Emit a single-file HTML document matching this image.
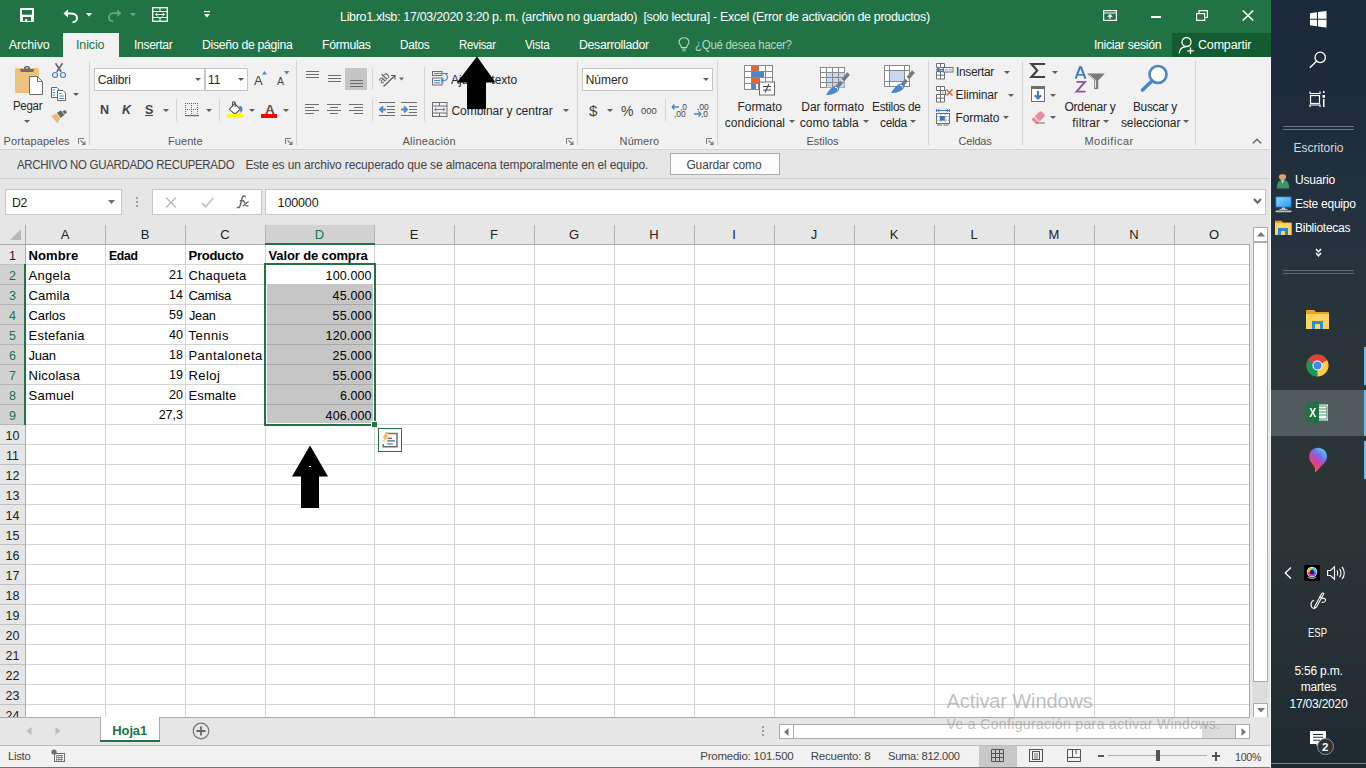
<!DOCTYPE html>
<html><head><meta charset="utf-8"><style>
*{margin:0;padding:0;box-sizing:border-box}
html,body{width:1366px;height:768px;overflow:hidden;background:#fff;font-family:"Liberation Sans",sans-serif;}
.a{position:absolute}
.t{position:absolute;white-space:nowrap;line-height:1}
svg{position:absolute;overflow:visible}
</style></head><body>
<div class="a" style="left:0px;top:225px;width:1250px;height:20px;background:#e6e6e6;"></div>
<div class="a" style="left:0px;top:245px;width:25px;height:472px;background:#e6e6e6;"></div>
<div class="a" style="left:26px;top:245px;width:1224px;height:472px;background:#fff;"></div>
<div class="a" style="left:26px;top:264px;width:1224px;height:1px;background:#d4d4d4;"></div>
<div class="a" style="left:26px;top:284px;width:1224px;height:1px;background:#d4d4d4;"></div>
<div class="a" style="left:26px;top:304px;width:1224px;height:1px;background:#d4d4d4;"></div>
<div class="a" style="left:26px;top:324px;width:1224px;height:1px;background:#d4d4d4;"></div>
<div class="a" style="left:26px;top:344px;width:1224px;height:1px;background:#d4d4d4;"></div>
<div class="a" style="left:26px;top:364px;width:1224px;height:1px;background:#d4d4d4;"></div>
<div class="a" style="left:26px;top:384px;width:1224px;height:1px;background:#d4d4d4;"></div>
<div class="a" style="left:26px;top:404px;width:1224px;height:1px;background:#d4d4d4;"></div>
<div class="a" style="left:26px;top:424px;width:1224px;height:1px;background:#d4d4d4;"></div>
<div class="a" style="left:26px;top:444px;width:1224px;height:1px;background:#d4d4d4;"></div>
<div class="a" style="left:26px;top:464px;width:1224px;height:1px;background:#d4d4d4;"></div>
<div class="a" style="left:26px;top:484px;width:1224px;height:1px;background:#d4d4d4;"></div>
<div class="a" style="left:26px;top:504px;width:1224px;height:1px;background:#d4d4d4;"></div>
<div class="a" style="left:26px;top:524px;width:1224px;height:1px;background:#d4d4d4;"></div>
<div class="a" style="left:26px;top:544px;width:1224px;height:1px;background:#d4d4d4;"></div>
<div class="a" style="left:26px;top:564px;width:1224px;height:1px;background:#d4d4d4;"></div>
<div class="a" style="left:26px;top:584px;width:1224px;height:1px;background:#d4d4d4;"></div>
<div class="a" style="left:26px;top:604px;width:1224px;height:1px;background:#d4d4d4;"></div>
<div class="a" style="left:26px;top:624px;width:1224px;height:1px;background:#d4d4d4;"></div>
<div class="a" style="left:26px;top:644px;width:1224px;height:1px;background:#d4d4d4;"></div>
<div class="a" style="left:26px;top:664px;width:1224px;height:1px;background:#d4d4d4;"></div>
<div class="a" style="left:26px;top:684px;width:1224px;height:1px;background:#d4d4d4;"></div>
<div class="a" style="left:26px;top:704px;width:1224px;height:1px;background:#d4d4d4;"></div>
<div class="a" style="left:26px;top:724px;width:1224px;height:1px;background:#d4d4d4;"></div>
<div class="a" style="left:105px;top:245px;width:1px;height:472px;background:#d4d4d4;"></div>
<div class="a" style="left:185px;top:245px;width:1px;height:472px;background:#d4d4d4;"></div>
<div class="a" style="left:265px;top:245px;width:1px;height:472px;background:#d4d4d4;"></div>
<div class="a" style="left:374px;top:245px;width:1px;height:472px;background:#d4d4d4;"></div>
<div class="a" style="left:454px;top:245px;width:1px;height:472px;background:#d4d4d4;"></div>
<div class="a" style="left:534px;top:245px;width:1px;height:472px;background:#d4d4d4;"></div>
<div class="a" style="left:614px;top:245px;width:1px;height:472px;background:#d4d4d4;"></div>
<div class="a" style="left:694px;top:245px;width:1px;height:472px;background:#d4d4d4;"></div>
<div class="a" style="left:774px;top:245px;width:1px;height:472px;background:#d4d4d4;"></div>
<div class="a" style="left:854px;top:245px;width:1px;height:472px;background:#d4d4d4;"></div>
<div class="a" style="left:934px;top:245px;width:1px;height:472px;background:#d4d4d4;"></div>
<div class="a" style="left:1014px;top:245px;width:1px;height:472px;background:#d4d4d4;"></div>
<div class="a" style="left:1094px;top:245px;width:1px;height:472px;background:#d4d4d4;"></div>
<div class="a" style="left:1174px;top:245px;width:1px;height:472px;background:#d4d4d4;"></div>
<div class="a" style="left:25px;top:225px;width:1px;height:20px;background:#b4b4b4;"></div>
<div class="a" style="left:105px;top:225px;width:1px;height:20px;background:#b4b4b4;"></div>
<div class="a" style="left:185px;top:225px;width:1px;height:20px;background:#b4b4b4;"></div>
<div class="a" style="left:265px;top:225px;width:1px;height:20px;background:#b4b4b4;"></div>
<div class="a" style="left:374px;top:225px;width:1px;height:20px;background:#b4b4b4;"></div>
<div class="a" style="left:454px;top:225px;width:1px;height:20px;background:#b4b4b4;"></div>
<div class="a" style="left:534px;top:225px;width:1px;height:20px;background:#b4b4b4;"></div>
<div class="a" style="left:614px;top:225px;width:1px;height:20px;background:#b4b4b4;"></div>
<div class="a" style="left:694px;top:225px;width:1px;height:20px;background:#b4b4b4;"></div>
<div class="a" style="left:774px;top:225px;width:1px;height:20px;background:#b4b4b4;"></div>
<div class="a" style="left:854px;top:225px;width:1px;height:20px;background:#b4b4b4;"></div>
<div class="a" style="left:934px;top:225px;width:1px;height:20px;background:#b4b4b4;"></div>
<div class="a" style="left:1014px;top:225px;width:1px;height:20px;background:#b4b4b4;"></div>
<div class="a" style="left:1094px;top:225px;width:1px;height:20px;background:#b4b4b4;"></div>
<div class="a" style="left:1174px;top:225px;width:1px;height:20px;background:#b4b4b4;"></div>
<div class="a" style="left:0px;top:244px;width:1250px;height:1px;background:#ababab;"></div>
<div class="a" style="left:25px;top:225px;width:1px;height:492px;background:#ababab;"></div>
<div class="a" style="left:0px;top:264px;width:25px;height:1px;background:#c0c0c0;"></div>
<div class="a" style="left:0px;top:284px;width:25px;height:1px;background:#c0c0c0;"></div>
<div class="a" style="left:0px;top:304px;width:25px;height:1px;background:#c0c0c0;"></div>
<div class="a" style="left:0px;top:324px;width:25px;height:1px;background:#c0c0c0;"></div>
<div class="a" style="left:0px;top:344px;width:25px;height:1px;background:#c0c0c0;"></div>
<div class="a" style="left:0px;top:364px;width:25px;height:1px;background:#c0c0c0;"></div>
<div class="a" style="left:0px;top:384px;width:25px;height:1px;background:#c0c0c0;"></div>
<div class="a" style="left:0px;top:404px;width:25px;height:1px;background:#c0c0c0;"></div>
<div class="a" style="left:0px;top:424px;width:25px;height:1px;background:#c0c0c0;"></div>
<div class="a" style="left:0px;top:444px;width:25px;height:1px;background:#c0c0c0;"></div>
<div class="a" style="left:0px;top:464px;width:25px;height:1px;background:#c0c0c0;"></div>
<div class="a" style="left:0px;top:484px;width:25px;height:1px;background:#c0c0c0;"></div>
<div class="a" style="left:0px;top:504px;width:25px;height:1px;background:#c0c0c0;"></div>
<div class="a" style="left:0px;top:524px;width:25px;height:1px;background:#c0c0c0;"></div>
<div class="a" style="left:0px;top:544px;width:25px;height:1px;background:#c0c0c0;"></div>
<div class="a" style="left:0px;top:564px;width:25px;height:1px;background:#c0c0c0;"></div>
<div class="a" style="left:0px;top:584px;width:25px;height:1px;background:#c0c0c0;"></div>
<div class="a" style="left:0px;top:604px;width:25px;height:1px;background:#c0c0c0;"></div>
<div class="a" style="left:0px;top:624px;width:25px;height:1px;background:#c0c0c0;"></div>
<div class="a" style="left:0px;top:644px;width:25px;height:1px;background:#c0c0c0;"></div>
<div class="a" style="left:0px;top:664px;width:25px;height:1px;background:#c0c0c0;"></div>
<div class="a" style="left:0px;top:684px;width:25px;height:1px;background:#c0c0c0;"></div>
<div class="a" style="left:0px;top:704px;width:25px;height:1px;background:#c0c0c0;"></div>
<div class="a" style="left:0px;top:724px;width:25px;height:1px;background:#c0c0c0;"></div>
<svg style="left:10px;top:229px" width="12" height="12"><path d="M11 0 L11 11 L0 11 Z" fill="#b8b8b8"/></svg>
<div class="a" style="left:266px;top:225px;width:108px;height:18px;background:#d2d2d2;"></div>
<div class="a" style="left:265px;top:243px;width:110px;height:2px;background:#217346;"></div>
<div class="a" style="left:0px;top:265px;width:24px;height:159px;background:#d2d2d2;"></div>
<div class="a" style="left:0px;top:284px;width:24px;height:1px;background:#b4b4b4;"></div>
<div class="a" style="left:0px;top:304px;width:24px;height:1px;background:#b4b4b4;"></div>
<div class="a" style="left:0px;top:324px;width:24px;height:1px;background:#b4b4b4;"></div>
<div class="a" style="left:0px;top:344px;width:24px;height:1px;background:#b4b4b4;"></div>
<div class="a" style="left:0px;top:364px;width:24px;height:1px;background:#b4b4b4;"></div>
<div class="a" style="left:0px;top:384px;width:24px;height:1px;background:#b4b4b4;"></div>
<div class="a" style="left:0px;top:404px;width:24px;height:1px;background:#b4b4b4;"></div>
<div class="a" style="left:0px;top:424px;width:24px;height:1px;background:#b4b4b4;"></div>
<div class="a" style="left:24px;top:264px;width:2px;height:161px;background:#217346;"></div>
<div class="t" style="left:25px;top:228px;width:80px;text-align:center;font-size:13px;color:#222">A</div>
<div class="t" style="left:105px;top:228px;width:80px;text-align:center;font-size:13px;color:#222">B</div>
<div class="t" style="left:185px;top:228px;width:80px;text-align:center;font-size:13px;color:#222">C</div>
<div class="t" style="left:265px;top:228px;width:109px;text-align:center;font-size:13px;color:#217346">D</div>
<div class="t" style="left:374px;top:228px;width:80px;text-align:center;font-size:13px;color:#222">E</div>
<div class="t" style="left:454px;top:228px;width:80px;text-align:center;font-size:13px;color:#222">F</div>
<div class="t" style="left:534px;top:228px;width:80px;text-align:center;font-size:13px;color:#222">G</div>
<div class="t" style="left:614px;top:228px;width:80px;text-align:center;font-size:13px;color:#222">H</div>
<div class="t" style="left:694px;top:228px;width:80px;text-align:center;font-size:13px;color:#222">I</div>
<div class="t" style="left:774px;top:228px;width:80px;text-align:center;font-size:13px;color:#222">J</div>
<div class="t" style="left:854px;top:228px;width:80px;text-align:center;font-size:13px;color:#222">K</div>
<div class="t" style="left:934px;top:228px;width:80px;text-align:center;font-size:13px;color:#222">L</div>
<div class="t" style="left:1014px;top:228px;width:80px;text-align:center;font-size:13px;color:#222">M</div>
<div class="t" style="left:1094px;top:228px;width:80px;text-align:center;font-size:13px;color:#222">N</div>
<div class="t" style="left:1174px;top:228px;width:80px;text-align:center;font-size:13px;color:#222">O</div>
<div class="t" style="left:0px;top:250.02px;width:25px;text-align:center;font-size:12.5px;color:#222">1</div>
<div class="t" style="left:0px;top:270.02px;width:25px;text-align:center;font-size:12.5px;color:#217346">2</div>
<div class="t" style="left:0px;top:290.02px;width:25px;text-align:center;font-size:12.5px;color:#217346">3</div>
<div class="t" style="left:0px;top:310.02px;width:25px;text-align:center;font-size:12.5px;color:#217346">4</div>
<div class="t" style="left:0px;top:330.02px;width:25px;text-align:center;font-size:12.5px;color:#217346">5</div>
<div class="t" style="left:0px;top:350.02px;width:25px;text-align:center;font-size:12.5px;color:#217346">6</div>
<div class="t" style="left:0px;top:370.02px;width:25px;text-align:center;font-size:12.5px;color:#217346">7</div>
<div class="t" style="left:0px;top:390.02px;width:25px;text-align:center;font-size:12.5px;color:#217346">8</div>
<div class="t" style="left:0px;top:410.02px;width:25px;text-align:center;font-size:12.5px;color:#217346">9</div>
<div class="t" style="left:0px;top:430.02px;width:25px;text-align:center;font-size:12.5px;color:#222">10</div>
<div class="t" style="left:0px;top:450.02px;width:25px;text-align:center;font-size:12.5px;color:#222">11</div>
<div class="t" style="left:0px;top:470.02px;width:25px;text-align:center;font-size:12.5px;color:#222">12</div>
<div class="t" style="left:0px;top:490.02px;width:25px;text-align:center;font-size:12.5px;color:#222">13</div>
<div class="t" style="left:0px;top:510.02px;width:25px;text-align:center;font-size:12.5px;color:#222">14</div>
<div class="t" style="left:0px;top:530.02px;width:25px;text-align:center;font-size:12.5px;color:#222">15</div>
<div class="t" style="left:0px;top:550.02px;width:25px;text-align:center;font-size:12.5px;color:#222">16</div>
<div class="t" style="left:0px;top:570.02px;width:25px;text-align:center;font-size:12.5px;color:#222">17</div>
<div class="t" style="left:0px;top:590.02px;width:25px;text-align:center;font-size:12.5px;color:#222">18</div>
<div class="t" style="left:0px;top:610.02px;width:25px;text-align:center;font-size:12.5px;color:#222">19</div>
<div class="t" style="left:0px;top:630.02px;width:25px;text-align:center;font-size:12.5px;color:#222">20</div>
<div class="t" style="left:0px;top:650.02px;width:25px;text-align:center;font-size:12.5px;color:#222">21</div>
<div class="t" style="left:0px;top:670.02px;width:25px;text-align:center;font-size:12.5px;color:#222">22</div>
<div class="t" style="left:0px;top:690.02px;width:25px;text-align:center;font-size:12.5px;color:#222">23</div>
<div class="t" style="left:0px;top:710.02px;width:25px;text-align:center;font-size:12.5px;color:#222">24</div>
<div class="a" style="left:267px;top:284px;width:106px;height:139px;background:#c6c6c6;"></div>
<div class="a" style="left:267px;top:304px;width:106px;height:1px;background:#a8a8a8;"></div>
<div class="a" style="left:267px;top:324px;width:106px;height:1px;background:#a8a8a8;"></div>
<div class="a" style="left:267px;top:344px;width:106px;height:1px;background:#a8a8a8;"></div>
<div class="a" style="left:267px;top:364px;width:106px;height:1px;background:#a8a8a8;"></div>
<div class="a" style="left:267px;top:384px;width:106px;height:1px;background:#a8a8a8;"></div>
<div class="a" style="left:267px;top:404px;width:106px;height:1px;background:#a8a8a8;"></div>
<div class="a" style="left:264px;top:263px;width:112px;height:2px;background:#217346;"></div>
<div class="a" style="left:264px;top:263px;width:2px;height:163px;background:#217346;"></div>
<div class="a" style="left:374px;top:263px;width:2px;height:158px;background:#217346;"></div>
<div class="a" style="left:264px;top:424px;width:107px;height:2px;background:#217346;"></div>
<div class="a" style="left:371px;top:421px;width:6px;height:6px;background:#fff;"></div>
<div class="a" style="left:372px;top:422px;width:5px;height:5px;background:#217346;"></div>
<div class="t" style="left:28.50px;top:249.15px;font-size:13px;color:#000;font-weight:bold;letter-spacing:0.120px;">Nombre</div>
<div class="t" style="left:108.50px;top:249.15px;font-size:13px;color:#000;font-weight:bold;letter-spacing:-0.300px;transform:scaleX(0.9385);transform-origin:0 0;">Edad</div>
<div class="t" style="left:188.50px;top:249.15px;font-size:13px;color:#000;font-weight:bold;letter-spacing:-0.257px;">Producto</div>
<div class="t" style="left:268.50px;top:249.15px;font-size:13px;color:#000;font-weight:bold;letter-spacing:-0.129px;">Valor de compra</div>
<div class="t" style="left:28.60px;top:269.15px;font-size:13px;color:#000;font-weight:normal;letter-spacing:0.260px;">Angela</div>
<div class="t" style="left:28.60px;top:289.15px;font-size:13px;color:#000;font-weight:normal;letter-spacing:0.140px;">Camila</div>
<div class="t" style="left:28.60px;top:309.15px;font-size:13px;color:#000;font-weight:normal;letter-spacing:-0.140px;">Carlos</div>
<div class="t" style="left:28.60px;top:329.15px;font-size:13px;color:#000;font-weight:normal;letter-spacing:0.212px;">Estefania</div>
<div class="t" style="left:28.60px;top:349.15px;font-size:13px;color:#000;font-weight:normal;letter-spacing:-0.267px;">Juan</div>
<div class="t" style="left:28.60px;top:369.15px;font-size:13px;color:#000;font-weight:normal;letter-spacing:0.214px;">Nicolasa</div>
<div class="t" style="left:28.60px;top:389.15px;font-size:13px;color:#000;font-weight:normal;letter-spacing:0.220px;">Samuel</div>
<div class="t" style="left:188.50px;top:269.15px;font-size:13px;color:#000;font-weight:normal;letter-spacing:0.200px;">Chaqueta</div>
<div class="t" style="left:188.50px;top:289.15px;font-size:13px;color:#000;font-weight:normal;letter-spacing:-0.280px;">Camisa</div>
<div class="t" style="left:188.50px;top:309.15px;font-size:13px;color:#000;font-weight:normal;letter-spacing:-0.300px;transform:scaleX(0.9817);transform-origin:0 0;">Jean</div>
<div class="t" style="left:188.50px;top:329.15px;font-size:13px;color:#000;font-weight:normal;letter-spacing:0.480px;">Tennis</div>
<div class="t" style="left:188.50px;top:349.15px;font-size:13px;color:#000;font-weight:normal;letter-spacing:0.430px;">Pantaloneta</div>
<div class="t" style="left:188.50px;top:369.15px;font-size:13px;color:#000;font-weight:normal;letter-spacing:0.450px;">Reloj</div>
<div class="t" style="left:188.50px;top:389.15px;font-size:13px;color:#000;font-weight:normal;letter-spacing:0.117px;">Esmalte</div>
<div class="t" style="left:100px;top:269.32px;width:83px;text-align:right;font-size:12.5px;color:#000">21</div>
<div class="t" style="left:100px;top:289.32px;width:83px;text-align:right;font-size:12.5px;color:#000">14</div>
<div class="t" style="left:100px;top:309.32px;width:83px;text-align:right;font-size:12.5px;color:#000">59</div>
<div class="t" style="left:100px;top:329.32px;width:83px;text-align:right;font-size:12.5px;color:#000">40</div>
<div class="t" style="left:100px;top:349.32px;width:83px;text-align:right;font-size:12.5px;color:#000">18</div>
<div class="t" style="left:100px;top:369.32px;width:83px;text-align:right;font-size:12.5px;color:#000">19</div>
<div class="t" style="left:100px;top:389.32px;width:83px;text-align:right;font-size:12.5px;color:#000">20</div>
<div class="t" style="left:100px;top:409.32px;width:83px;text-align:right;font-size:12.5px;color:#000">27,3</div>
<div class="t" style="left:325.60px;top:269.57px;font-size:12.5px;color:#000;font-weight:normal;letter-spacing:0.133px;">100.000</div>
<div class="t" style="left:332.60px;top:289.57px;font-size:12.5px;color:#000;font-weight:normal;letter-spacing:0.160px;">45.000</div>
<div class="t" style="left:332.60px;top:309.57px;font-size:12.5px;color:#000;font-weight:normal;letter-spacing:0.160px;">55.000</div>
<div class="t" style="left:325.60px;top:329.57px;font-size:12.5px;color:#000;font-weight:normal;letter-spacing:0.133px;">120.000</div>
<div class="t" style="left:332.60px;top:349.57px;font-size:12.5px;color:#000;font-weight:normal;letter-spacing:0.160px;">25.000</div>
<div class="t" style="left:332.60px;top:369.57px;font-size:12.5px;color:#000;font-weight:normal;letter-spacing:0.160px;">55.000</div>
<div class="t" style="left:340.10px;top:389.57px;font-size:12.5px;color:#000;font-weight:normal;letter-spacing:0.050px;">6.000</div>
<div class="t" style="left:325.60px;top:409.57px;font-size:12.5px;color:#000;font-weight:normal;letter-spacing:0.133px;">406.000</div>
<div class="a" style="left:1249px;top:245px;width:1px;height:472px;background:#ababab;"></div>
<div class="a" style="left:0px;top:0px;width:1271px;height:57px;background:#217346;"></div>
<svg style="left:20px;top:8px" width="14" height="14" viewBox="0 0 14 14">
<rect x="0" y="0" width="14" height="14" rx="0.8" fill="#fff"/>
<path d="M2 2 H12 V6 L11.3 6.7 H2.7 L2 6 Z" fill="#217346"/>
<rect x="3" y="9" width="8" height="3.9" fill="#217346"/>
<rect x="5.2" y="11" width="1.9" height="1.9" fill="#fff"/>
</svg>
<svg style="left:63px;top:8px" width="16" height="15" viewBox="0 0 16 15">
<path d="M0.5 5.5 L5 1.5 V9.5 Z" fill="#fff"/>
<path d="M4 5.5 H8.5 C11.8 5.5 14 7.5 14 10 C14 12.5 12 14.2 9.5 14.2" fill="none" stroke="#fff" stroke-width="2"/>
</svg>
<svg style="left:86px;top:13px" width="6" height="4"><path d="M0 0 H6 L3 3.5 Z" fill="#fff"/></svg>
<svg style="left:107px;top:8px" width="15" height="14" viewBox="0 0 16 15" opacity="0.35">
<path d="M15.5 5.5 L11 1.5 V9.5 Z" fill="#fff"/>
<path d="M12 5.5 H7.5 C4.2 5.5 2 7.5 2 10 C2 12.5 4 14.2 6.5 14.2" fill="none" stroke="#fff" stroke-width="2"/>
</svg>
<svg style="left:130px;top:13px" width="6" height="4" opacity="0.35"><path d="M0 0 H6 L3 3.5 Z" fill="#fff"/></svg>
<svg style="left:152px;top:7px" width="16" height="15" viewBox="0 0 16 15">
<rect x="0.7" y="0.7" width="14.6" height="13.6" fill="none" stroke="#fff" stroke-width="1.3"/>
<path d="M1 4.5 H15 M1 10.5 H15 M8 1 V4.5 M8 10.5 V14" stroke="#fff" stroke-width="1.1"/>
<path d="M3.5 7.5 H12.5 M3.5 7.5 L5.5 6 M3.5 7.5 L5.5 9 M12.5 7.5 L10.5 6 M12.5 7.5 L10.5 9" stroke="#fff" stroke-width="1"/>
</svg>
<svg style="left:204px;top:11px" width="6" height="7"><rect x="0" y="0" width="6" height="1.2" fill="#fff"/><path d="M0 3 H6 L3 6.5 Z" fill="#fff"/></svg>
<div class="t" style="left:339.50px;top:10.67px;font-size:12.5px;color:#fff;font-weight:normal;letter-spacing:-0.300px;transform:scaleX(0.9970);transform-origin:0 0;">Libro1.xlsb: 17/03/2020 3:20 p. m. (archivo no guardado)&nbsp; [solo lectura] - Excel (Error de activación de productos)</div>
<svg style="left:1103px;top:10px" width="14" height="11" viewBox="0 0 14 11">
<rect x="0.6" y="0.6" width="12.8" height="9.8" fill="none" stroke="#fff" stroke-width="1.2"/>
<path d="M1 3 H13" stroke="#fff" stroke-width="1"/>
<path d="M7 9 V4.5 M4.8 6.8 L7 4.5 L9.2 6.8" fill="none" stroke="#fff" stroke-width="1.2"/>
</svg>
<div class="a" style="left:1151px;top:16px;width:10px;height:1.5px;background:#fff;"></div>
<svg style="left:1196px;top:10px" width="12" height="11" viewBox="0 0 12 11">
<rect x="0.6" y="3.6" width="8" height="6.8" fill="none" stroke="#fff" stroke-width="1.2"/>
<path d="M3 3.5 V0.6 H11.4 V7.5 H8.8" fill="none" stroke="#fff" stroke-width="1.2"/>
</svg>
<svg style="left:1242px;top:10px" width="12" height="11" viewBox="0 0 12 11">
<path d="M0.8 0.5 L11.2 10.5 M11.2 0.5 L0.8 10.5" stroke="#fff" stroke-width="1.5"/>
</svg>
<div class="a" style="left:63px;top:33px;width:56px;height:24px;background:#f1f1f1;"></div>
<div class="t" style="left:8.80px;top:38.87px;font-size:12.5px;color:#fff;font-weight:normal;letter-spacing:-0.117px;">Archivo</div>
<div class="t" style="left:76.00px;top:38.87px;font-size:12.5px;color:#217346;font-weight:normal;letter-spacing:-0.140px;">Inicio</div>
<div class="t" style="left:134.00px;top:38.87px;font-size:12.5px;color:#fff;font-weight:normal;letter-spacing:-0.300px;transform:scaleX(0.9628);transform-origin:0 0;">Insertar</div>
<div class="t" style="left:202.00px;top:38.87px;font-size:12.5px;color:#fff;font-weight:normal;letter-spacing:-0.300px;transform:scaleX(0.9784);transform-origin:0 0;">Diseño de página</div>
<div class="t" style="left:322.00px;top:38.87px;font-size:12.5px;color:#fff;font-weight:normal;letter-spacing:-0.300px;transform:scaleX(0.9800);transform-origin:0 0;">Fórmulas</div>
<div class="t" style="left:400.40px;top:38.87px;font-size:12.5px;color:#fff;font-weight:normal;letter-spacing:-0.300px;transform:scaleX(0.9397);transform-origin:0 0;">Datos</div>
<div class="t" style="left:459.00px;top:38.87px;font-size:12.5px;color:#fff;font-weight:normal;letter-spacing:-0.300px;transform:scaleX(0.9113);transform-origin:0 0;">Revisar</div>
<div class="t" style="left:525.00px;top:38.87px;font-size:12.5px;color:#fff;font-weight:normal;letter-spacing:-0.300px;transform:scaleX(0.9394);transform-origin:0 0;">Vista</div>
<div class="t" style="left:579.00px;top:38.87px;font-size:12.5px;color:#fff;font-weight:normal;letter-spacing:-0.300px;transform:scaleX(0.9804);transform-origin:0 0;">Desarrollador</div>
<svg style="left:678px;top:37px" width="12" height="15" viewBox="0 0 12 15">
<path d="M3.5 10.5 C3.5 8.5 1 7.5 1 5 C1 2.5 3.2 0.8 6 0.8 C8.8 0.8 11 2.5 11 5 C11 7.5 8.5 8.5 8.5 10.5 Z" fill="none" stroke="#b9d7c4" stroke-width="1.1"/>
<path d="M3.8 12 H8.2 M4.5 13.8 H7.5" stroke="#b9d7c4" stroke-width="1.1"/>
</svg>
<div class="t" style="left:695.00px;top:38.87px;font-size:12.5px;color:#b9d7c4;font-weight:normal;letter-spacing:-0.300px;transform:scaleX(0.9177);transform-origin:0 0;">¿Qué desea hacer?</div>
<div class="t" style="left:1094.00px;top:38.87px;font-size:12.5px;color:#fff;font-weight:normal;letter-spacing:-0.300px;transform:scaleX(0.9783);transform-origin:0 0;">Iniciar sesión</div>
<div class="a" style="left:1172px;top:33px;width:99px;height:24px;background:#135c32;"></div>
<svg style="left:1178px;top:36px" width="18" height="18" viewBox="0 0 18 18">
<circle cx="8.5" cy="6" r="4.5" fill="none" stroke="#fff" stroke-width="1.3"/>
<path d="M1.2 17.5 C1.5 13.5 4 11 7.5 10.8" fill="none" stroke="#fff" stroke-width="1.3"/>
<path d="M12.5 11.5 V18 M9.3 14.8 H15.8" stroke="#fff" stroke-width="1.3"/>
</svg>
<div class="t" style="left:1198.00px;top:38.87px;font-size:12.5px;color:#fff;font-weight:normal;letter-spacing:-0.175px;">Compartir</div>
<div class="a" style="left:0px;top:57px;width:1271px;height:92px;background:#f1f1f1;"></div>
<div class="a" style="left:0px;top:148px;width:1271px;height:1px;background:#f6f6f6;"></div>
<div class="a" style="left:0px;top:149px;width:1271px;height:1px;background:#d2d2d2;"></div>
<div class="a" style="left:89px;top:61px;width:1px;height:84px;background:#d4d4d4;"></div>
<div class="a" style="left:296px;top:61px;width:1px;height:84px;background:#d4d4d4;"></div>
<div class="a" style="left:577px;top:61px;width:1px;height:84px;background:#d4d4d4;"></div>
<div class="a" style="left:717px;top:61px;width:1px;height:84px;background:#d4d4d4;"></div>
<div class="a" style="left:928px;top:61px;width:1px;height:84px;background:#d4d4d4;"></div>
<div class="a" style="left:1022px;top:61px;width:1px;height:84px;background:#d4d4d4;"></div>
<div class="a" style="left:1195px;top:61px;width:1px;height:84px;background:#d4d4d4;"></div>
<svg style="left:14px;top:65px" width="30" height="30" viewBox="0 0 30 30">
<rect x="1" y="3" width="24" height="25" rx="1.5" fill="#eec27c"/>
<path d="M6 4 H20 C20 5.5 19.5 7 18.5 7 H7.5 C6.5 7 6 5.5 6 4 Z" fill="#6e6e6e"/>
<path d="M10 4.5 V2.5 C10 0.5 16 0.5 16 2.5 V4.5 Z" fill="#6e6e6e"/>
<rect x="12" y="2" width="2" height="1.5" fill="#eec27c"/>
<path d="M15.5 11.5 H23.5 L28.5 16.5 V29.5 H15.5 Z" fill="#fff" stroke="#6e6e6e" stroke-width="1"/>
<path d="M23.5 11.5 V16.5 H28.5" fill="none" stroke="#6e6e6e" stroke-width="1"/>
</svg>
<div class="t" style="left:12.50px;top:99.67px;font-size:12.5px;color:#262626;font-weight:normal;letter-spacing:-0.300px;transform:scaleX(0.9161);transform-origin:0 0;">Pegar</div>
<svg style="left:24px;top:120px" width="6" height="4"><path d="M0 0 H6 L3 3 Z" fill="#5e5e5e"/></svg>
<svg style="left:50px;top:62px" width="18" height="18" viewBox="0 0 18 18">
<path d="M5.5 1.3 L11.2 9.8 M12.5 1.3 L6.8 9.8" stroke="#666" stroke-width="1.6"/>
<circle cx="5" cy="13" r="2.5" fill="none" stroke="#4a86c8" stroke-width="1.2"/>
<circle cx="13" cy="13" r="2.5" fill="none" stroke="#4a86c8" stroke-width="1.2"/>
</svg>
<svg style="left:50px;top:86px" width="18" height="16" viewBox="0 0 18 16">
<path d="M1.5 1.5 H7 L8.5 3 V11.5 H1.5 Z" fill="#fff" stroke="#666" stroke-width="1"/>
<path d="M2.5 4 H5 M2.5 6.5 H5 M2.5 9 H5" stroke="#4a86c8" stroke-width="1"/>
<path d="M7.5 4.5 H13 L15.5 7 V14.5 H7.5 Z" fill="#fff" stroke="#666" stroke-width="1"/>
<path d="M9 7.5 H11.5 M9 10 H14 M9 12.5 H14" stroke="#4a86c8" stroke-width="1"/>
</svg>
<svg style="left:73px;top:93px" width="6" height="4"><path d="M0 0 H6 L3 3 Z" fill="#5e5e5e"/></svg>
<svg style="left:51px;top:110px" width="17" height="14" viewBox="0 0 17 14">
<path d="M0.3 6 L5.5 3.5 L9 8.5 L6.5 13.5 Z" fill="#e8bd72"/>
<path d="M6 2.5 L10 0.5 L13.5 5 L9.5 8 Z" fill="#666"/>
<path d="M11.5 1.5 L14 0 L16.2 2.3 L13.8 4.2 Z" fill="#666"/>
</svg>
<div class="t" style="left:3.60px;top:135.54px;font-size:11px;color:#555;font-weight:normal;letter-spacing:0.109px;">Portapapeles</div>
<svg style="left:78px;top:138px" width="8" height="7" viewBox="0 0 8 7">
<path d="M0.5 6 V0.5 H6" fill="none" stroke="#7a7a7a" stroke-width="1"/>
<path d="M2.5 2.5 L7 6.5 M7 3.5 V6.5 H4" fill="none" stroke="#7a7a7a" stroke-width="1.1"/></svg>
<div class="a" style="left:94px;top:68px;width:111px;height:23px;background:#fff;border:1px solid #c6c6c6"></div>
<div class="a" style="left:205px;top:68px;width:43px;height:23px;background:#fff;border:1px solid #c6c6c6"></div>
<div class="t" style="left:97.80px;top:73.69px;font-size:12px;color:#262626;font-weight:normal;letter-spacing:-0.167px;">Calibri</div>
<svg style="left:195px;top:78px" width="6" height="4"><path d="M0 0 H6 L3 3 Z" fill="#5e5e5e"/></svg>
<div class="t" style="left:208px;top:74px;font-size:12px;color:#262626;font-weight:normal;">11</div>
<svg style="left:238px;top:78px" width="6" height="4"><path d="M0 0 H6 L3 3 Z" fill="#5e5e5e"/></svg>
<div class="t" style="left:254px;top:74px;font-size:13px;color:#444;font-weight:normal;">A</div>
<svg style="left:262px;top:71px" width="5" height="4"><path d="M0 3.5 L2.5 0 L5 3.5 Z" fill="#4a86c8"/></svg>
<div class="t" style="left:277px;top:76px;font-size:10.5px;color:#444;font-weight:normal;">A</div>
<svg style="left:284px;top:71px" width="6" height="4"><path d="M0 0 H5.5 L2.75 3.5 Z" fill="#4a86c8"/></svg>
<div class="t" style="left:100px;top:104px;font-size:12.5px;color:#444;font-weight:bold;">N</div>
<div class="t" style="left:122px;top:104px;font-size:12.5px;color:#444;font-weight:bold;"><i>K</i></div>
<div class="t" style="left:145px;top:104px;font-size:12.5px;color:#444;font-weight:bold;">S</div>
<div class="a" style="left:145px;top:115px;width:8px;height:1.3px;background:#444;"></div>
<svg style="left:163px;top:109px" width="6" height="4"><path d="M0 0 H6 L3 3 Z" fill="#5e5e5e"/></svg>
<div class="a" style="left:176px;top:99px;width:1px;height:22px;background:#d4d4d4;"></div>
<svg style="left:185px;top:103px" width="14" height="14" viewBox="0 0 14 14"><rect x="0" y="0" width="1" height="1" fill="#666"/><rect x="2" y="0" width="1" height="1" fill="#666"/><rect x="4" y="0" width="1" height="1" fill="#666"/><rect x="6" y="0" width="1" height="1" fill="#666"/><rect x="8" y="0" width="1" height="1" fill="#666"/><rect x="10" y="0" width="1" height="1" fill="#666"/><rect x="12" y="0" width="1" height="1" fill="#666"/><rect x="0" y="2" width="1" height="1" fill="#666"/><rect x="6" y="2" width="1" height="1" fill="#666"/><rect x="12" y="2" width="1" height="1" fill="#666"/><rect x="0" y="4" width="1" height="1" fill="#666"/><rect x="6" y="4" width="1" height="1" fill="#666"/><rect x="12" y="4" width="1" height="1" fill="#666"/><rect x="0" y="6" width="1" height="1" fill="#666"/><rect x="2" y="6" width="1" height="1" fill="#666"/><rect x="4" y="6" width="1" height="1" fill="#666"/><rect x="6" y="6" width="1" height="1" fill="#666"/><rect x="8" y="6" width="1" height="1" fill="#666"/><rect x="10" y="6" width="1" height="1" fill="#666"/><rect x="12" y="6" width="1" height="1" fill="#666"/><rect x="0" y="8" width="1" height="1" fill="#666"/><rect x="6" y="8" width="1" height="1" fill="#666"/><rect x="12" y="8" width="1" height="1" fill="#666"/><rect x="0" y="10" width="1" height="1" fill="#666"/><rect x="6" y="10" width="1" height="1" fill="#666"/><rect x="12" y="10" width="1" height="1" fill="#666"/><rect x="0" y="12" width="14" height="1.2" fill="#666"/>
</svg>
<svg style="left:206px;top:109px" width="6" height="4"><path d="M0 0 H6 L3 3 Z" fill="#5e5e5e"/></svg>
<div class="a" style="left:219px;top:99px;width:1px;height:22px;background:#d4d4d4;"></div>
<svg style="left:227px;top:101px" width="17" height="17" viewBox="0 0 17 17">
<path d="M2.3 8.3 L7.7 2.6 L13.5 8.5 L7.7 13 Z" fill="#fff" stroke="#555" stroke-width="1.1"/>
<path d="M5.5 5.5 V1.8 C5.5 0.6 8.2 0.6 8.2 1.8 V6" fill="none" stroke="#555" stroke-width="1.1"/>
<path d="M12 4.8 C14.5 4.8 16 6.5 15.5 9 C15.2 10.5 14 11.5 13 12 L13.5 8.5 Z" fill="#4a86c8"/>
<rect x="0" y="13" width="16" height="4" fill="#ffff00"/>
</svg>
<svg style="left:249px;top:109px" width="6" height="4"><path d="M0 0 H6 L3 3 Z" fill="#5e5e5e"/></svg>
<div class="t" style="left:265.00px;top:102.72px;font-size:13.5px;color:#555;font-weight:bold;letter-spacing:0.000px;">A</div>
<div class="a" style="left:261px;top:114px;width:16px;height:4px;background:#ff0000;"></div>
<svg style="left:283px;top:109px" width="6" height="4"><path d="M0 0 H6 L3 3 Z" fill="#5e5e5e"/></svg>
<div class="t" style="left:168.00px;top:135.64px;font-size:11px;color:#555;font-weight:normal;letter-spacing:0.060px;">Fuente</div>
<svg style="left:285px;top:138px" width="8" height="7" viewBox="0 0 8 7">
<path d="M0.5 6 V0.5 H6" fill="none" stroke="#7a7a7a" stroke-width="1"/>
<path d="M2.5 2.5 L7 6.5 M7 3.5 V6.5 H4" fill="none" stroke="#7a7a7a" stroke-width="1.1"/></svg>
<svg style="left:306px;top:71px" width="13" height="9"><rect x="0" y="0" width="13" height="1" fill="#6e6e6e"/><rect x="0" y="3" width="13" height="1" fill="#6e6e6e"/><rect x="0" y="6" width="13" height="1" fill="#6e6e6e"/></svg>
<svg style="left:328px;top:75px" width="13" height="9"><rect x="0" y="0" width="13" height="1" fill="#6e6e6e"/><rect x="0" y="3" width="13" height="1" fill="#6e6e6e"/><rect x="0" y="6" width="13" height="1" fill="#6e6e6e"/></svg>
<div class="a" style="left:345px;top:68px;width:22px;height:22px;background:#c5c5c5;"></div>
<svg style="left:350px;top:80px" width="13" height="9"><rect x="0" y="0" width="13" height="1" fill="#6e6e6e"/><rect x="0" y="3" width="13" height="1" fill="#6e6e6e"/><rect x="0" y="6" width="13" height="1" fill="#6e6e6e"/></svg>
<div class="a" style="left:372px;top:68px;width:1px;height:22px;background:#d4d4d4;"></div>
<svg style="left:377px;top:70px" width="28" height="18" viewBox="0 0 28 18">
<g transform="rotate(-45 7 8)"><text x="1" y="11" font-family="Liberation Sans" font-size="10.5" fill="#555">ab</text></g>
<path d="M6.5 16.5 L17.5 6" stroke="#555" stroke-width="1.1"/>
<path d="M14 5.5 H18 V9.5" fill="none" stroke="#555" stroke-width="1.1"/>
<path d="M22 7.5 H27 L24.5 10.5 Z" fill="#666"/>
</svg>
<svg style="left:305px;top:104px" width="60" height="12">
<path d="M0 0.5 H14 M0 3.5 H9 M0 6.5 H14 M0 9.5 H9" stroke="#6e6e6e" stroke-width="1"/>
<path d="M22 0.5 H36 M25 3.5 H33 M22 6.5 H36 M25 9.5 H33" stroke="#6e6e6e" stroke-width="1"/>
<path d="M44 0.5 H58 M49 3.5 H58 M44 6.5 H58 M49 9.5 H58" stroke="#6e6e6e" stroke-width="1"/>
</svg>
<div class="a" style="left:372px;top:99px;width:1px;height:22px;background:#d4d4d4;"></div>
<svg style="left:379px;top:102px" width="40" height="15">
<path d="M0 0.5 H16 M8 4.5 H16 M8 7.5 H16 M8 10.5 H16 M0 13.5 H16" stroke="#6e6e6e" stroke-width="1"/>
<path d="M1 7.5 H7 M4 4.5 L1 7.5 L4 10.5" stroke="#4a86c8" stroke-width="1.8" fill="none"/>
<path d="M22 0.5 H38 M30 4.5 H38 M30 7.5 H38 M30 10.5 H38 M22 13.5 H38" stroke="#6e6e6e" stroke-width="1"/>
<path d="M22 7.5 H28 M25 4.5 L28 7.5 L25 10.5" stroke="#4a86c8" stroke-width="1.8" fill="none"/>
</svg>
<div class="a" style="left:424px;top:67px;width:1px;height:54px;background:#d4d4d4;"></div>
<svg style="left:431px;top:70px" width="18" height="17" viewBox="0 0 18 17">
<rect x="1.5" y="1.5" width="9.5" height="4" fill="none" stroke="#6e6e6e" stroke-width="1"/>
<rect x="1.5" y="8" width="9.5" height="7" fill="none" stroke="#6e6e6e" stroke-width="1"/>
<path d="M3 3.5 H17 M3 10.5 H9 M3 12.8 H9" stroke="#4a86c8" stroke-width="1"/>
<path d="M13 3.5 C17.5 3.5 17.5 10.5 13 10.5 H10.5 M12.5 8.5 L10.5 10.5 L12.5 12.5" fill="none" stroke="#4a86c8" stroke-width="1.1"/>
</svg>
<div class="t" style="left:451.00px;top:74.19px;font-size:12px;color:#262626;font-weight:normal;letter-spacing:-0.042px;">Ajustar texto</div>
<svg style="left:431px;top:102px" width="17" height="15" viewBox="0 0 17 15">
<rect x="1.5" y="0.5" width="14.5" height="14" fill="none" stroke="#6e6e6e" stroke-width="1"/>
<path d="M1.5 4 H16 M1.5 11 H16 M8.5 0.5 V4 M8.5 11 V14.5" stroke="#6e6e6e" stroke-width="1"/>
<path d="M3.5 7.5 H14 M5.5 6 L3.5 7.5 L5.5 9 M12 6 L14 7.5 L12 9" fill="none" stroke="#4a86c8" stroke-width="1"/>
</svg>
<div class="t" style="left:451.50px;top:105.49px;font-size:12px;color:#262626;font-weight:normal;letter-spacing:-0.047px;">Combinar y centrar</div>
<svg style="left:563px;top:109px" width="6" height="4"><path d="M0 0 H6 L3 3 Z" fill="#5e5e5e"/></svg>
<div class="t" style="left:402.40px;top:135.54px;font-size:11px;color:#555;font-weight:normal;letter-spacing:0.278px;">Alineación</div>
<svg style="left:566px;top:138px" width="8" height="7" viewBox="0 0 8 7">
<path d="M0.5 6 V0.5 H6" fill="none" stroke="#7a7a7a" stroke-width="1"/>
<path d="M2.5 2.5 L7 6.5 M7 3.5 V6.5 H4" fill="none" stroke="#7a7a7a" stroke-width="1.1"/></svg>
<div class="a" style="left:582px;top:68px;width:131px;height:23px;background:#fff;border:1px solid #c6c6c6"></div>
<div class="t" style="left:585.70px;top:73.99px;font-size:12px;color:#262626;font-weight:normal;letter-spacing:-0.020px;">Número</div>
<svg style="left:703px;top:78px" width="6" height="4"><path d="M0 0 H6 L3 3 Z" fill="#5e5e5e"/></svg>
<div class="t" style="left:589px;top:103px;font-size:15px;color:#444;font-weight:normal;">$</div>
<svg style="left:607px;top:109px" width="6" height="4"><path d="M0 0 H6 L3 3 Z" fill="#5e5e5e"/></svg>
<div class="t" style="left:621px;top:104px;font-size:14px;color:#444;font-weight:normal;">%</div>
<div class="t" style="left:641px;top:106px;font-size:9.5px;color:#444;font-weight:normal;">000</div>
<div class="a" style="left:665px;top:99px;width:1px;height:22px;background:#d4d4d4;"></div>
<svg style="left:671px;top:102px" width="40" height="16">
<path d="M1 5 H8 M1 5 L3.5 2.5 M1 5 L3.5 7.5" stroke="#4a86c8" stroke-width="1.4" fill="none"/>
<text x="9" y="8" font-family="Liberation Sans" font-size="8.5" fill="#444">,0</text>
<text x="3" y="15" font-family="Liberation Sans" font-size="8.5" fill="#444">,00</text>
<text x="26" y="8" font-family="Liberation Sans" font-size="8.5" fill="#444">,00</text>
<text x="30" y="15" font-family="Liberation Sans" font-size="8.5" fill="#444">,0</text>
<path d="M23 12 H30 M30 12 L27.5 9.5 M30 12 L27.5 14.5" stroke="#4a86c8" stroke-width="1.4" fill="none"/>
</svg>
<div class="t" style="left:619.60px;top:135.54px;font-size:11px;color:#555;font-weight:normal;letter-spacing:0.100px;">Número</div>
<svg style="left:706px;top:138px" width="8" height="7" viewBox="0 0 8 7">
<path d="M0.5 6 V0.5 H6" fill="none" stroke="#7a7a7a" stroke-width="1"/>
<path d="M2.5 2.5 L7 6.5 M7 3.5 V6.5 H4" fill="none" stroke="#7a7a7a" stroke-width="1.1"/></svg>
<svg style="left:744px;top:65px" width="32" height="31" viewBox="0 0 32 31">
<rect x="0.5" y="0.5" width="28" height="24" fill="#fff" stroke="#8a8a8a" stroke-width="1"/>
<path d="M0.5 6.5 H28.5 M0.5 12.5 H28.5 M0.5 18.5 H28.5 M7.5 0.5 V24.5 M14.5 0.5 V24.5 M21.5 0.5 V24.5" stroke="#8a8a8a" stroke-width="1"/>
<rect x="8" y="1" width="6" height="5" fill="#e0633a"/>
<rect x="8" y="7" width="12" height="5" fill="#4a86c8"/>
<rect x="8" y="13" width="8" height="5" fill="#e0633a"/>
<rect x="8" y="19" width="4" height="5" fill="#4a86c8"/>
<rect x="15.5" y="17" width="15" height="13" fill="#fff" stroke="#6e6e6e" stroke-width="1"/>
<path d="M19 21.5 H27 M19 25 H27 M25 19 L21 27.5" stroke="#444" stroke-width="1.1"/>
</svg>
<svg style="left:820px;top:67px" width="30" height="29" viewBox="0 0 30 29">
<rect x="0.5" y="0.5" width="24" height="20" fill="#fff" stroke="#8a8a8a" stroke-width="1"/>
<rect x="6.5" y="5.5" width="18" height="15" fill="#c5daf0"/>
<path d="M0.5 5.5 H24.5 M0.5 10.5 H24.5 M0.5 15.5 H24.5 M6.5 0.5 V20.5 M12.5 0.5 V20.5 M18.5 0.5 V20.5" stroke="#8a8a8a" stroke-width="1"/>
<path d="M17.5 19.5 L21.5 15 M23 13.2 L28.5 6.5" stroke="#7a7a7a" stroke-width="3.6"/>
<path d="M6 28 C9 23 12 19.5 15.5 18.5 C18 18 20 20 19 22.5 C17.5 26 12 28 6 28 Z" fill="#4a86c8"/>
<path d="M15 20.5 C16.5 20 18 21 17.5 22.5" fill="none" stroke="#fff" stroke-width="1"/>
</svg>
<svg style="left:884px;top:65px" width="30" height="29" viewBox="0 0 30 29">
<rect x="0.5" y="0.5" width="25" height="21" fill="#fff" stroke="#8a8a8a" stroke-width="1"/>
<path d="M0.5 5.5 H25.5 M0.5 16.5 H25.5 M5.5 0.5 V21.5 M20.5 0.5 V21.5" stroke="#8a8a8a" stroke-width="1"/>
<rect x="6" y="6" width="14" height="10" fill="#c5daf0"/>
<path d="M18.5 19.5 L22.5 15 M24 13.2 L29.5 6.5" stroke="#7a7a7a" stroke-width="3.6"/>
<path d="M7 28 C10 23 13 19.5 16.5 18.5 C19 18 21 20 20 22.5 C18.5 26 13 28 7 28 Z" fill="#4a86c8"/>
<path d="M16 20.5 C17.5 20 19 21 18.5 22.5" fill="none" stroke="#fff" stroke-width="1"/>
</svg>
<div class="t" style="left:737.50px;top:100.69px;font-size:12px;color:#262626;font-weight:normal;letter-spacing:-0.050px;">Formato</div>
<div class="t" style="left:724.80px;top:116.69px;font-size:12px;color:#262626;font-weight:normal;letter-spacing:0.020px;">condicional</div>
<svg style="left:789px;top:120px" width="6" height="4"><path d="M0 0 H6 L3 3 Z" fill="#5e5e5e"/></svg>
<div class="t" style="left:801.30px;top:100.69px;font-size:12px;color:#262626;font-weight:normal;letter-spacing:-0.050px;">Dar formato</div>
<div class="t" style="left:799.70px;top:116.69px;font-size:12px;color:#262626;font-weight:normal;letter-spacing:0.022px;">como tabla</div>
<svg style="left:863px;top:120px" width="6" height="4"><path d="M0 0 H6 L3 3 Z" fill="#5e5e5e"/></svg>
<div class="t" style="left:872.40px;top:100.69px;font-size:12px;color:#262626;font-weight:normal;letter-spacing:-0.300px;transform:scaleX(0.9899);transform-origin:0 0;">Estilos de</div>
<div class="t" style="left:879.50px;top:116.69px;font-size:12px;color:#262626;font-weight:normal;letter-spacing:-0.300px;transform:scaleX(0.9891);transform-origin:0 0;">celda</div>
<svg style="left:910px;top:120px" width="6" height="4"><path d="M0 0 H6 L3 3 Z" fill="#5e5e5e"/></svg>
<div class="t" style="left:806.60px;top:135.64px;font-size:11px;color:#555;font-weight:normal;letter-spacing:-0.067px;">Estilos</div>
<svg style="left:935px;top:62px" width="19" height="18" viewBox="0 0 19 18">
<path d="M1.5 1.5 H9.5 V5.5 H1.5 Z M5.5 1.5 V5.5" fill="#fff" stroke="#6e6e6e" stroke-width="1"/>
<path d="M1.5 9.5 H9.5 V17 H1.5 Z M1.5 13.2 H9.5 M5.5 9.5 V17" fill="#fff" stroke="#6e6e6e" stroke-width="1"/>
<rect x="8.5" y="5.5" width="9.5" height="4.5" fill="#fff" stroke="#6e6e6e" stroke-width="1"/>
<rect x="9.8" y="6.8" width="3.2" height="2" fill="#a9c8ea"/><rect x="13.8" y="6.8" width="3.2" height="2" fill="#a9c8ea"/>
<path d="M2 7.8 H9 M4.5 5.3 L2 7.8 L4.5 10.3" fill="none" stroke="#3f78c0" stroke-width="1.6"/>
</svg>
<div class="t" style="left:955.60px;top:65.99px;font-size:12px;color:#262626;font-weight:normal;letter-spacing:-0.300px;transform:scaleX(0.9922);transform-origin:0 0;">Insertar</div>
<svg style="left:1004px;top:71px" width="6" height="4"><path d="M0 0 H6 L3 3 Z" fill="#5e5e5e"/></svg>
<svg style="left:935px;top:85px" width="19" height="18" viewBox="0 0 19 18">
<path d="M1.5 1.5 H9.5 V5.5 H1.5 Z M5.5 1.5 V5.5" fill="#fff" stroke="#6e6e6e" stroke-width="1"/>
<path d="M1.5 9.5 H9.5 V17 H1.5 Z M1.5 13.2 H9.5 M5.5 9.5 V17" fill="#fff" stroke="#6e6e6e" stroke-width="1"/>
<rect x="5.5" y="5.5" width="5" height="4" fill="#fff" stroke="#6e6e6e" stroke-width="1"/>
<rect x="6.6" y="6.6" width="2.8" height="1.9" fill="#a9c8ea"/>
<path d="M11.5 4.5 L17.5 10.5 M17.5 4.5 L11.5 10.5" stroke="#e0633a" stroke-width="1.5"/>
</svg>
<div class="t" style="left:955.60px;top:88.89px;font-size:12px;color:#262626;font-weight:normal;letter-spacing:-0.157px;">Eliminar</div>
<svg style="left:1008px;top:94px" width="6" height="4"><path d="M0 0 H6 L3 3 Z" fill="#5e5e5e"/></svg>
<svg style="left:935px;top:108px" width="17" height="18" viewBox="0 0 17 18">
<path d="M1.5 1 V4 M14.5 1 V4 M2.5 2.5 H13.5 M4.5 1 L2.5 2.5 L4.5 4 M11.5 1 L13.5 2.5 L11.5 4" fill="none" stroke="#3f78c0" stroke-width="1"/>
<rect x="1.5" y="5.5" width="13" height="10" fill="#fff" stroke="#6e6e6e" stroke-width="1"/>
<path d="M1.5 8.8 H14.5 M1.5 12.2 H14.5 M5.8 5.5 V15.5 M10.2 5.5 V15.5" stroke="#8a8a8a" stroke-width="0.9" stroke-dasharray="1.5 0.8"/>
<rect x="4.8" y="8" width="5" height="4.5" fill="#3f78c0"/>
<path d="M2 17 H7 M8.5 17 H13.5" stroke="#6e6e6e" stroke-width="1"/>
</svg>
<div class="t" style="left:955.50px;top:111.89px;font-size:12px;color:#262626;font-weight:normal;letter-spacing:-0.117px;">Formato</div>
<svg style="left:1003px;top:116px" width="6" height="4"><path d="M0 0 H6 L3 3 Z" fill="#5e5e5e"/></svg>
<div class="t" style="left:958.60px;top:135.94px;font-size:11px;color:#555;font-weight:normal;letter-spacing:-0.220px;">Celdas</div>
<svg style="left:1030px;top:63px" width="15" height="15" viewBox="0 0 15 15">
<path d="M14 2 V1 H1.5 L7.2 7.5 L1.5 14 H14 V13" fill="none" stroke="#444" stroke-width="2.2"/>
</svg>
<svg style="left:1052px;top:71px" width="6" height="4"><path d="M0 0 H6 L3 3 Z" fill="#5e5e5e"/></svg>
<svg style="left:1031px;top:86px" width="14" height="16" viewBox="0 0 14 16">
<rect x="0.5" y="0.5" width="13" height="15" fill="#fff" stroke="#6e6e6e" stroke-width="1"/>
<rect x="0" y="0" width="14" height="3" fill="#6e6e6e"/>
<path d="M7 5 V12.5 M3.8 9.2 L7 12.5 L10.2 9.2" fill="none" stroke="#3f78c0" stroke-width="2.2"/>
</svg>
<svg style="left:1050px;top:94px" width="6" height="4"><path d="M0 0 H6 L3 3 Z" fill="#5e5e5e"/></svg>
<svg style="left:1031px;top:110px" width="15" height="14" viewBox="0 0 15 14">
<path d="M3.5 6.5 L8 2 C9 1 10 1 11 2 L13 4 C14 5 14 6 13 7 L8.5 11.5 Z" fill="#e88ea0"/><path d="M2.8 7.2 L8 12.2 L6.8 13.2 C6 14 5 14 4.2 13.2 L1.2 10.2 C0.6 9.6 0.6 8.8 1.2 8.4 Z" fill="#e88ea0"/>
<path d="M5 13 H14" stroke="#6e6e6e" stroke-width="1"/>
</svg>
<svg style="left:1050px;top:116px" width="6" height="4"><path d="M0 0 H6 L3 3 Z" fill="#5e5e5e"/></svg>
<svg style="left:1074px;top:66px" width="32" height="28" viewBox="0 0 32 28">
<path d="M1.6 12.7 L5.9 1.3 H7.1 L11.5 12.7" fill="none" stroke="#3f78c0" stroke-width="2"/>
<path d="M3.6 8.8 H9.5" stroke="#3f78c0" stroke-width="1.6"/>
<path d="M2.4 15.9 H11 L2.5 25.6 H11.5" fill="none" stroke="#8e52b5" stroke-width="1.9"/>
<path d="M13 7.6 H30.8 L24.2 14.6 V23 H20.2 V14.6 Z" fill="#7a7a7a"/>
<path d="M15.6 8.9 L21.6 14.9 V21.8" fill="none" stroke="#fff" stroke-width="0.9"/>
</svg>
<svg style="left:1140px;top:64px" width="30" height="28" viewBox="0 0 30 28">
<circle cx="18" cy="10.5" r="8.5" fill="#fff" stroke="#4a86c8" stroke-width="2.6"/>
<path d="M12 17 L2.5 26" stroke="#4a86c8" stroke-width="3.6" stroke-linecap="round"/>
</svg>
<div class="t" style="left:1064.40px;top:100.69px;font-size:12px;color:#262626;font-weight:normal;letter-spacing:-0.237px;">Ordenar y</div>
<div class="t" style="left:1072.30px;top:116.69px;font-size:12px;color:#262626;font-weight:normal;letter-spacing:0.167px;">filtrar</div>
<svg style="left:1103px;top:120px" width="6" height="4"><path d="M0 0 H6 L3 3 Z" fill="#5e5e5e"/></svg>
<div class="t" style="left:1133.20px;top:100.69px;font-size:12px;color:#262626;font-weight:normal;letter-spacing:-0.300px;transform:scaleX(0.9888);transform-origin:0 0;">Buscar y</div>
<div class="t" style="left:1121.00px;top:116.69px;font-size:12px;color:#262626;font-weight:normal;letter-spacing:-0.130px;">seleccionar</div>
<svg style="left:1183px;top:120px" width="6" height="4"><path d="M0 0 H6 L3 3 Z" fill="#5e5e5e"/></svg>
<div class="t" style="left:1084.40px;top:135.64px;font-size:11px;color:#555;font-weight:normal;letter-spacing:0.525px;">Modificar</div>
<svg style="left:1252px;top:138px" width="10" height="6"><path d="M0.8 5.5 L5 1.2 L9.2 5.5" fill="none" stroke="#6e6e6e" stroke-width="1.5"/></svg>
<div class="a" style="left:0px;top:150px;width:1271px;height:28px;background:#e6e6e6;"></div>
<div class="a" style="left:0px;top:178px;width:1271px;height:1px;background:#d0d0d0;"></div>
<div class="t" style="left:16.70px;top:159.09px;font-size:12px;color:#444;font-weight:normal;letter-spacing:-0.300px;transform:scaleX(0.9544);transform-origin:0 0;">ARCHIVO NO GUARDADO RECUPERADO</div>
<div class="t" style="left:245.40px;top:159.09px;font-size:12px;color:#444;font-weight:normal;letter-spacing:-0.139px;">Este es un archivo recuperado que se almacena temporalmente en el equipo.</div>
<div class="a" style="left:670px;top:153px;width:110px;height:22px;background:#fdfdfd;border:1px solid #ababab"></div>
<div class="t" style="left:686.40px;top:159.09px;font-size:12px;color:#444;font-weight:normal;letter-spacing:-0.136px;">Guardar como</div>
<div class="a" style="left:0px;top:179px;width:1271px;height:46px;background:#e6e6e6;"></div>
<div class="a" style="left:5px;top:189px;width:117px;height:26px;background:#fff;border:1px solid #c6c6c6"></div>
<div class="t" style="left:12.30px;top:196.77px;font-size:12.5px;color:#222;font-weight:normal;letter-spacing:-0.300px;transform:scaleX(0.9873);transform-origin:0 0;">D2</div>
<svg style="left:108px;top:200px" width="7" height="4"><path d="M0 0 H7 L3.5 4 Z" fill="#6e6e6e"/></svg>
<div class="a" style="left:136px;top:197px;width:2px;height:2px;background:#a0a0a0;"></div>
<div class="a" style="left:136px;top:201px;width:2px;height:2px;background:#a0a0a0;"></div>
<div class="a" style="left:136px;top:205px;width:2px;height:2px;background:#a0a0a0;"></div>
<div class="a" style="left:152px;top:189px;width:110px;height:26px;background:#fff;border:1px solid #c6c6c6"></div>
<svg style="left:165px;top:197px" width="12" height="11"><path d="M1 0.5 L11 10.5 M11 0.5 L1 10.5" stroke="#bdbdbd" stroke-width="1.5"/></svg>
<svg style="left:201px;top:197px" width="13" height="11"><path d="M0.8 6 L4.5 9.8 L12.5 0.8" fill="none" stroke="#c8c8c8" stroke-width="2"/></svg>
<svg style="left:236px;top:195px" width="16" height="15"><path d="M9.6 2.2 C9 0.6 6.8 0.6 6.2 2.6 L4.2 10.6 C3.7 12.6 2.2 13 1 12.2" fill="none" stroke="#666" stroke-width="1.5"/><path d="M3.8 5.6 H8.2" stroke="#666" stroke-width="1.3"/><path d="M6.8 6.8 C8 6.2 8.6 7 9 8.2 L9.8 10.2 C10.2 11.2 11.2 11.2 12.4 10.6 M12.6 6.6 L6.8 11" fill="none" stroke="#666" stroke-width="1.2"/></svg>
<div class="a" style="left:265px;top:189px;width:1001px;height:26px;background:#fff;border:1px solid #c6c6c6"></div>
<div class="t" style="left:277.60px;top:196.77px;font-size:12.5px;color:#222;font-weight:normal;letter-spacing:-0.140px;">100000</div>
<svg style="left:1253px;top:198px" width="9" height="7"><path d="M1 1 L4.5 4.8 L8 1" fill="none" stroke="#666" stroke-width="2"/></svg>
<div class="a" style="left:1250px;top:225px;width:21px;height:492px;background:#e6e6e6;"></div>
<div class="a" style="left:1253px;top:227px;width:15px;height:15px;background:#fff;border:1px solid #ababab"></div>
<svg style="left:1257px;top:232px" width="8" height="5"><path d="M0 4.5 L4 0 L8 4.5 Z" fill="#777"/></svg>
<div class="a" style="left:1253px;top:242px;width:15px;height:440px;background:#fff;border:1px solid #ababab"></div>
<div class="a" style="left:1253px;top:682px;width:15px;height:21px;background:#dcdcdc;"></div>
<div class="a" style="left:1253px;top:703px;width:15px;height:15px;background:#fff;border:1px solid #ababab"></div>
<svg style="left:1257px;top:708px" width="8" height="5"><path d="M0 0 L8 0 L4 4.5 Z" fill="#777"/></svg>
<div class="a" style="left:0px;top:717px;width:1271px;height:28px;background:#e6e6e6;"></div>
<div class="a" style="left:0px;top:717px;width:1250px;height:1px;background:#ababab;"></div>
<svg style="left:26px;top:727px" width="6" height="8"><path d="M5.5 0 V8 L0.5 4 Z" fill="#bdbdbd"/></svg>
<svg style="left:55px;top:727px" width="6" height="8"><path d="M0.5 0 V8 L5.5 4 Z" fill="#bdbdbd"/></svg>
<div class="a" style="left:100px;top:717px;width:60px;height:25px;background:#fff;border:1px solid #ababab;border-top:none"></div>
<div class="a" style="left:100px;top:740px;width:60px;height:2px;background:#217346;"></div>
<div class="t" style="left:112.30px;top:724.25px;font-size:13px;color:#217346;font-weight:bold;letter-spacing:-0.125px;">Hoja1</div>
<svg style="left:192px;top:722px" width="18" height="18"><circle cx="9" cy="9" r="7.8" fill="none" stroke="#777" stroke-width="1.2"/><path d="M9 4.5 V13.5 M4.5 9 H13.5" stroke="#666" stroke-width="1.8"/></svg>
<div class="a" style="left:762px;top:726px;width:2px;height:2px;background:#a0a0a0;"></div>
<div class="a" style="left:762px;top:730px;width:2px;height:2px;background:#a0a0a0;"></div>
<div class="a" style="left:762px;top:734px;width:2px;height:2px;background:#a0a0a0;"></div>
<div class="a" style="left:779px;top:724px;width:471px;height:15px;background:#fff;border:1px solid #ababab"></div>
<div class="a" style="left:779px;top:724px;width:15px;height:15px;background:#fff;border:1px solid #ababab"></div>
<svg style="left:784px;top:728px" width="5" height="8"><path d="M4.5 0 V8 L0 4 Z" fill="#777"/></svg>
<div class="a" style="left:1202px;top:725px;width:33px;height:13px;background:#dcdcdc;"></div>
<div class="a" style="left:1235px;top:724px;width:15px;height:15px;background:#fff;border:1px solid #ababab"></div>
<svg style="left:1241px;top:728px" width="5" height="8"><path d="M0.5 0 V8 L5 4 Z" fill="#777"/></svg>
<div class="a" style="left:0px;top:745px;width:1271px;height:23px;background:#f1f1f1;"></div>
<div class="a" style="left:0px;top:745px;width:1271px;height:1px;background:#bcbcbc;"></div>
<div class="t" style="left:7.60px;top:751.32px;font-size:11.5px;color:#444;font-weight:normal;letter-spacing:-0.300px;transform:scaleX(0.9827);transform-origin:0 0;">Listo</div>
<svg style="left:51px;top:749px" width="14" height="13" viewBox="0 0 14 13">
<circle cx="3" cy="3" r="2.6" fill="#6e6e6e"/>
<rect x="3.5" y="4.5" width="10" height="8" fill="none" stroke="#6e6e6e" stroke-width="1"/>
<path d="M6 6.5 H12 M6 8.5 H12 M6 10.5 H12 M5.5 6 V12 M8 6 V12 M10.5 6 V12" stroke="#6e6e6e" stroke-width="0.7"/>
</svg>
<div class="t" style="left:700.20px;top:751.32px;font-size:11.5px;color:#444;font-weight:normal;letter-spacing:-0.225px;">Promedio: 101.500</div>
<div class="t" style="left:810.70px;top:751.32px;font-size:11.5px;color:#444;font-weight:normal;letter-spacing:-0.210px;">Recuento: 8</div>
<div class="t" style="left:887.60px;top:751.32px;font-size:11.5px;color:#444;font-weight:normal;letter-spacing:-0.300px;transform:scaleX(0.9677);transform-origin:0 0;">Suma: 812.000</div>
<div class="a" style="left:979px;top:746px;width:38px;height:22px;background:#c8c8c8;"></div>
<svg style="left:991px;top:749px" width="13" height="13" viewBox="0 0 13 13">
<path d="M0.5 0.5 H12.5 V12.5 H0.5 Z M0.5 4.5 H12.5 M0.5 8.5 H12.5 M4.5 0.5 V12.5 M8.5 0.5 V12.5" fill="none" stroke="#555" stroke-width="1"/>
</svg>
<svg style="left:1029px;top:749px" width="14" height="13" viewBox="0 0 14 13">
<rect x="0.5" y="0.5" width="13" height="12" fill="none" stroke="#555" stroke-width="1"/>
<rect x="3.5" y="2.5" width="7" height="8" fill="none" stroke="#555" stroke-width="1"/>
<path d="M5 5 H9 M5 7 H9 M5 9 H9" stroke="#555" stroke-width="0.8"/>
</svg>
<svg style="left:1067px;top:749px" width="14" height="13" viewBox="0 0 14 13">
<path d="M0.5 0.5 H13.5 V12.5 H0.5 Z M0.5 8.5 H13.5 M5.5 0.5 V8.5 M9 0.5 V5" fill="none" stroke="#555" stroke-width="1"/>
</svg>
<div class="a" style="left:1098px;top:755px;width:6px;height:2px;background:#555;"></div>
<div class="a" style="left:1108px;top:755px;width:99px;height:1px;background:#b0b0b0;"></div>
<div class="a" style="left:1156px;top:750px;width:4px;height:11px;background:#555;"></div>
<div class="a" style="left:1212px;top:755px;width:8px;height:2px;background:#555;"></div>
<div class="a" style="left:1215px;top:751.5px;width:2px;height:9px;background:#555;"></div>
<div class="t" style="left:1235.20px;top:751.52px;font-size:11.5px;color:#444;font-weight:normal;letter-spacing:-0.300px;transform:scaleX(0.9298);transform-origin:0 0;">100%</div>
<div class="a" style="left:0px;top:767px;width:1271px;height:1px;background:#6f757c;"></div>
<div class="a" style="left:1270px;top:57px;width:1px;height:711px;background:#f5f5f5;"></div>
<div class="t" style="left:946.60px;top:690.72px;font-size:20px;color:rgba(140,140,140,0.55);font-weight:normal;letter-spacing:-0.114px;">Activar Windows</div>
<div class="t" style="left:946.60px;top:717.0px;font-size:14px;color:rgba(140,140,140,0.55);font-weight:normal;letter-spacing:0.346px;">Ve a Configuración para activar Windows.</div>
<svg style="left:0;top:0" width="1366" height="768"><path d="M477 56.5 L495.5 82.5 L486 82.5 L486 109 L467 109 L467 82.5 L457 82.5 Z" fill="#000"/><path d="M310 445.5 L328 476.5 L319 476.5 L319 508 L301 508 L301 476.5 L292 476.5 Z" fill="#000"/><rect x="309" y="466" width="2" height="1" fill="#fff"/></svg>
<div class="a" style="left:378px;top:428px;width:24px;height:24px;border:1px solid #217346;background:#fff"></div>
<svg style="left:382px;top:432px" width="17" height="16" viewBox="0 0 17 16">
<path d="M6.2 1.5 H15 V14.8 H1.2 V12" fill="none" stroke="#6e6e6e" stroke-width="1.5"/>
<path d="M4 0 H7 L4.8 4.5 H6.8 L0.2 11 L2.6 6 H0.6 Z" fill="#e8bd72"/>
<rect x="6" y="5.6" width="4" height="1.4" fill="#d24a2a"/>
<rect x="5.2" y="8.2" width="7.6" height="1.4" fill="#3f78c0"/>
<rect x="5.2" y="11.2" width="5.8" height="1.5" fill="#6aaa8a"/>
</svg>
<div class="a" style="left:1271px;top:0;width:95px;height:768px;background:linear-gradient(180deg,#1c293b 0%,#1f2c3c 18%,#26333e 33%,#2a3538 50%,#2c3536 68%,#243035 85%,#1e2a31 100%)"></div>
<svg style="left:1310px;top:11px" width="17" height="17" viewBox="0 0 17 17">
<path d="M0 2.3 L7 1.3 V7.8 H0 Z M8 1.1 L16.5 0 V7.8 H8 Z M0 8.8 H7 V15.2 L0 14.2 Z M8 8.8 H16.5 V16.5 L8 15.4 Z" fill="#fff"/>
</svg>
<svg style="left:1309px;top:51px" width="18" height="18" viewBox="0 0 18 18">
<circle cx="11.2" cy="6.4" r="5.2" fill="none" stroke="#fff" stroke-width="1.3"/>
<path d="M7.5 10.2 L0.8 16.8" stroke="#fff" stroke-width="1.4"/>
</svg>
<svg style="left:1309px;top:91px" width="18" height="17" viewBox="0 0 18 17">
<path d="M1 0.5 V2.5 H11 V0.5 M1 16 V14 H11 V16" fill="none" stroke="#fff" stroke-width="1.2"/>
<rect x="1.5" y="4.5" width="9" height="8" fill="none" stroke="#fff" stroke-width="1.2"/>
<rect x="14" y="0" width="1.5" height="2" fill="#fff"/>
<rect x="13.5" y="4" width="2.5" height="2.8" fill="#fff"/>
<rect x="14" y="8" width="1.5" height="8" fill="#fff"/>
</svg>
<div class="a" style="left:1283px;top:126px;width:71px;height:1px;background:#6b7480;"></div>
<div class="a" style="left:1283px;top:129px;width:71px;height:1px;background:#6b7480;"></div>
<div class="t" style="left:1271px;top:142px;width:95px;text-align:center;font-size:12px;color:#d8dadd">Escritorio</div>
<svg style="left:1276px;top:171px" width="14" height="18" viewBox="0 0 14 18">
<path d="M0.8 17.5 C0.8 11.5 3 9 7 9 C11 9 13.2 11.5 13.2 17.5 Z" fill="#3d9462"/>
<path d="M5.5 9.2 L6.3 12.5 L8 9.2 Z" fill="#f2f2f2"/>
<ellipse cx="6.5" cy="5.3" rx="3.6" ry="4" fill="#d4a276"/>
<path d="M2.8 4.8 C2.5 1.5 4.5 0.6 6.5 0.6 C9 0.6 10.5 1.8 10.2 4.8 C9 3.2 7 3 5 3.3 C4 3.6 3.3 4.2 2.8 4.8 Z" fill="#3a2c22"/>
</svg>
<div class="t" style="left:1295px;top:174px;font-size:12px;color:#fff;font-weight:normal;letter-spacing:-0.2px">Usuario</div>
<svg style="left:1275px;top:196px" width="17" height="17" viewBox="0 0 17 17">
<defs><linearGradient id="mon" x1="0" y1="0" x2="1" y2="1"><stop offset="0" stop-color="#8fd3ff"/><stop offset="1" stop-color="#2f9be6"/></linearGradient></defs>
<rect x="0.5" y="0.5" width="16" height="11" fill="#1e78c8"/>
<rect x="1.3" y="1.3" width="14.4" height="9.4" fill="url(#mon)"/>
<rect x="7" y="11.5" width="3" height="1.5" fill="#c8ced3"/>
<rect x="4.5" y="12.8" width="8" height="1" fill="#d8dde2"/>
<rect x="0.5" y="14.5" width="16" height="1.8" rx="0.8" fill="#c0c6cc"/>
</svg>
<div class="t" style="left:1295px;top:198px;font-size:12px;color:#fff;font-weight:normal;letter-spacing:-0.25px">Este equipo</div>
<svg style="left:1275px;top:220px" width="17" height="16" viewBox="0 0 17 16">
<path d="M0 0.8 H6.5 L8 2.5 H16.5 V15 H0 Z" fill="#e9a21f"/>
<rect x="0" y="3.2" width="16.5" height="11.8" fill="#ffd45c"/>
<path d="M3 15 V8 H13 V15 H10 V11 H6 V15 Z" fill="#2b87d8"/>
</svg>
<div class="t" style="left:1295px;top:222px;font-size:12px;color:#fff;font-weight:normal;letter-spacing:-0.25px">Bibliotecas</div>
<svg style="left:1315px;top:248px" width="7" height="10" viewBox="0 0 7 10">
<path d="M1 1 L3.5 3.8 L6 1 M1 5 L3.5 7.8 L6 5" fill="none" stroke="#fff" stroke-width="1.5"/>
</svg>
<svg style="left:1306px;top:310px" width="23" height="19" viewBox="0 0 23 19">
<path d="M0 1 C0 0.4 0.4 0 1 0 H8 L10 2 H22 C22.6 2 23 2.4 23 3 V18 H0 Z" fill="#e9a521"/>
<rect x="0" y="4" width="23" height="15" fill="#ffd45e"/>
<path d="M6 19 V11 H17 V19 H14 V14 H9 V19 Z" fill="#2e8fd9"/>
</svg>
<svg style="left:1306px;top:354px" width="23" height="23" viewBox="0 0 24 24">
<circle cx="12" cy="12" r="11.5" fill="#db4437"/>
<path d="M12 12 L2.1 6.3 A11.5 11.5 0 0 0 12 23.5 Z" fill="#0f9d58"/>
<path d="M12 12 L12 23.5 A11.5 11.5 0 0 0 21.9 6.3 Z" fill="#ffcd40"/>
<path d="M12 12 L2.1 6.3 A11.5 11.5 0 0 1 21.9 6.3 Z" fill="#db4437"/>
<circle cx="12" cy="12" r="5.3" fill="#fff"/>
<circle cx="12" cy="12" r="4.2" fill="#4285f4"/>
</svg>
<div class="a" style="left:1364px;top:347px;width:2px;height:38px;background:#76b9ed;"></div>
<div class="a" style="left:1271px;top:390px;width:93px;height:46px;background:#505b5e;"></div>
<div class="a" style="left:1364px;top:390px;width:2px;height:46px;background:#76b9ed;"></div>
<svg style="left:1306px;top:401px" width="23" height="23" viewBox="0 0 23 23">
<rect x="8" y="3.5" width="14" height="16" fill="#fff" stroke="#1d6b3e" stroke-width="0"/>
<path d="M9 5 H21 V18 H9 Z" fill="none" stroke="#1f6e42" stroke-width="0.8"/>
<path d="M12 5 V18 M9 8 H21 M9 11 H21 M9 14 H21" stroke="#1f6e42" stroke-width="0.8"/>
<path d="M0 2.5 L13 0 V23 L0 20.5 Z" fill="#1e7145"/>
<path d="M3.5 7 L5.8 11.5 L3.3 16 H5.2 L6.8 12.8 L8.4 16 H10.3 L7.8 11.5 L10.1 7 H8.2 L6.8 10 L5.4 7 Z" fill="#fff"/>
</svg>
<div class="a" style="left:1364px;top:441px;width:2px;height:38px;background:#76b9ed;"></div>
<svg style="left:1309px;top:447px" width="19" height="26" viewBox="0 0 19 26">
<defs><linearGradient id="p3" x1="0.85" y1="0" x2="0.2" y2="1"><stop offset="0" stop-color="#3de8f2"/><stop offset="0.35" stop-color="#7a6cf0"/><stop offset="0.62" stop-color="#d2409c"/><stop offset="0.82" stop-color="#ff4a5a"/><stop offset="1" stop-color="#ffb020"/></linearGradient></defs>
<path d="M9 0.8 C14 0.8 18 4.5 18 9.5 C18 14 14.5 17 11 20.5 C9 22.5 7.5 24 6 25 C6.5 22.5 6 20.5 4.5 18.5 C2 15.5 0.2 13 0.2 9.5 C0.2 4.5 4 0.8 9 0.8 Z" fill="url(#p3)"/>
</svg>
<svg style="left:1284px;top:567px" width="8" height="12"><path d="M7 0.5 L1.2 6 L7 11.5" fill="none" stroke="#fff" stroke-width="1.3"/></svg>
<svg style="left:1304px;top:565px" width="16" height="16" viewBox="0 0 16 16">
<rect x="0" y="0" width="16" height="16" rx="1.5" fill="#000"/>
<circle cx="8" cy="7" r="5.2" fill="#fff"/>
<path d="M8 7 L8 2.4 A4.6 4.6 0 0 1 12.6 7 Z" fill="#35c8e8"/>
<path d="M8 7 L12.6 7 A4.6 4.6 0 0 1 8 11.6 Z" fill="#6a4cf0"/>
<path d="M8 7 L8 11.6 A4.6 4.6 0 0 1 3.4 7 Z" fill="#e8348a"/>
<path d="M8 7 L3.4 7 A4.6 4.6 0 0 1 8 2.4 Z" fill="#f5b82a"/>
<circle cx="8" cy="7" r="2.2" fill="#1a2a3a"/>
<path d="M3.8 11.8 C4.5 13.8 11.5 13.8 12.2 11.8" fill="none" stroke="#eee" stroke-width="0.9"/>
</svg>
<svg style="left:1327px;top:566px" width="19" height="14" viewBox="0 0 19 14">
<path d="M0.6 4.5 H3.5 L7.5 0.8 V13.2 L3.5 9.5 H0.6 Z" fill="none" stroke="#fff" stroke-width="1.1"/>
<path d="M10 4.5 C11 5.5 11 8.5 10 9.5 M12.5 2.8 C14.5 4.8 14.5 9.2 12.5 11.2 M15 1 C18 4 18 10 15 13" fill="none" stroke="#fff" stroke-width="1.1"/>
</svg>
<svg style="left:1309px;top:591px" width="19" height="19" viewBox="0 0 19 19">
<path d="M5.8 15.3 L12.8 2.6 C13.4 1.5 15 1.9 14.6 3.1 L7.6 15.9 L5.5 17.3 Z" fill="none" stroke="#fff" stroke-width="1.1"/>
<path d="M5 9.2 C1.2 10.5 0.9 16.2 4.8 17.6" fill="none" stroke="#fff" stroke-width="1.1"/>
<path d="M11.8 7.2 C15.2 6.8 17.5 8.2 16.2 10 C15.4 11 14 11.4 12.6 11.4" fill="none" stroke="#fff" stroke-width="1.1"/>
<path d="M10.4 5.5 L12.6 6.7" stroke="#fff" stroke-width="1"/>
</svg>
<div class="t" style="left:1308px;top:626.8px;font-size:12.5px;color:#fff;transform:scaleX(0.76);transform-origin:0 0">ESP</div>
<div class="t" style="left:1271px;top:665px;width:95px;text-align:center;font-size:12px;color:#fff;letter-spacing:-0.2px">5:56 p.m.</div>
<div class="t" style="left:1271px;top:681px;width:95px;text-align:center;font-size:12px;color:#fff;letter-spacing:-0.2px">martes</div>
<div class="t" style="left:1271px;top:698px;width:95px;text-align:center;font-size:12px;color:#fff;letter-spacing:-0.2px">17/03/2020</div>
<svg style="left:1309px;top:730px" width="28" height="26" viewBox="0 0 28 26">
<path d="M1 1 H17 V14 H10 L7.5 16 V14 H1 Z" fill="#fff"/>
<path d="M4 4.5 H14 M4 7.3 H14 M4 10.2 H11" stroke="#1f2c33" stroke-width="1.1"/>
<circle cx="16.5" cy="16.6" r="8" fill="#333" stroke="#8a8f93" stroke-width="1"/>
<text x="13" y="21" font-family="Liberation Sans" font-weight="bold" font-size="11.5" fill="#fff">2</text>
</svg>
<div class="a" style="left:1271px;top:763px;width:95px;height:1px;background:#7a8288;"></div>
<div class="a" style="left:1283px;top:270px;width:71px;height:1px;background:#5f6a72;"></div>
<div class="a" style="left:1283px;top:273px;width:71px;height:1px;background:#5f6a72;"></div>
</body></html>
